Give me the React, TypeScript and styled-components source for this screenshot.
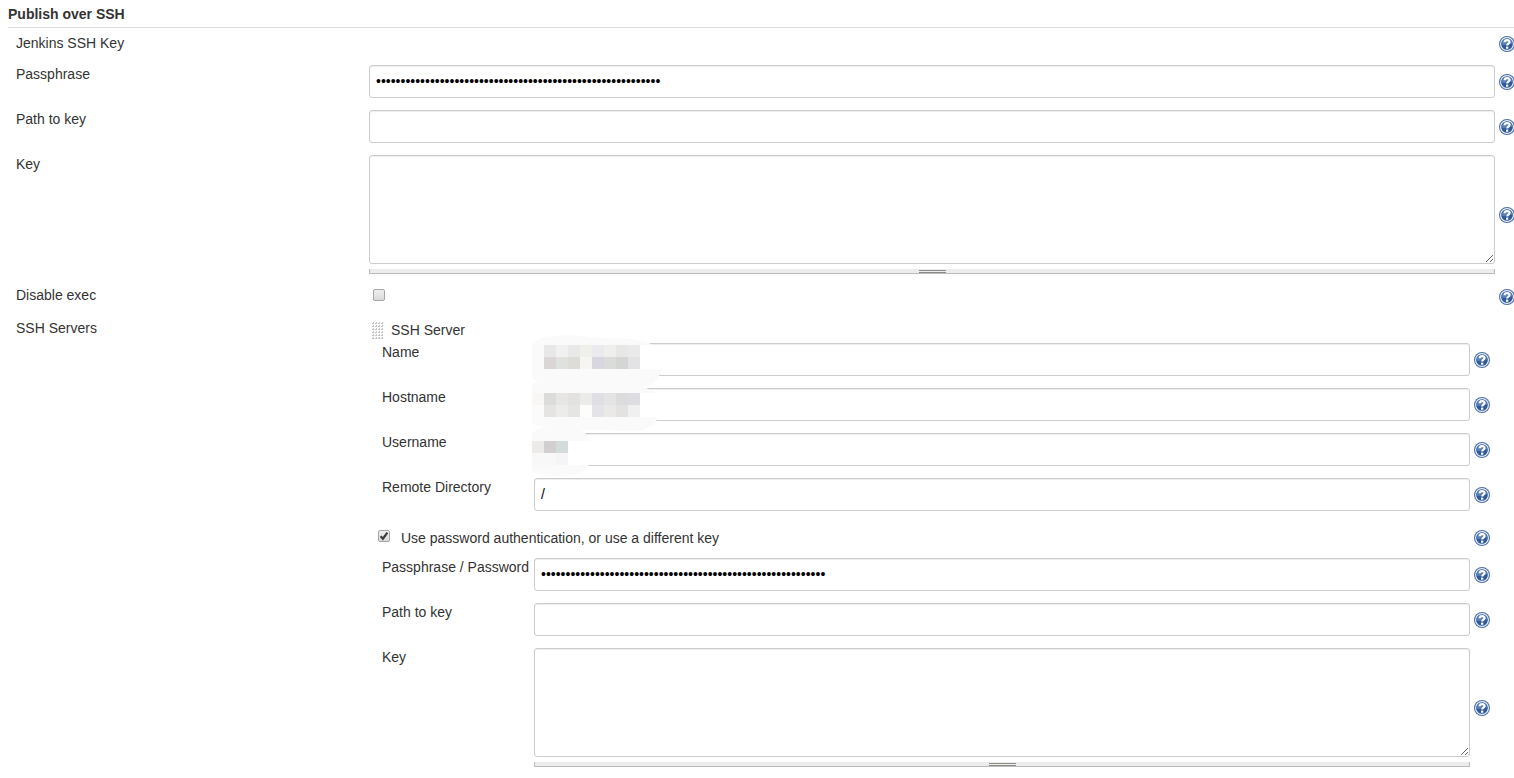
import React, { useId } from "react";
import styled, { createGlobalStyle } from "styled-components";

const GlobalStyle = createGlobalStyle`
  *, *::before, *::after { box-sizing: border-box; }
  body {
    margin: 0;
    background: #fff;
    color: #333;
    font: 14px/18px "Liberation Sans", Arial, Helvetica, sans-serif;
  }
`;

const Page = styled.main`
  padding: 5px 0 11px 8px;
  overflow-x: clip;
`;

const SectionTitle = styled.h1`
  margin: 0;
  padding-bottom: 4px;
  border-bottom: 1px solid #ddd;
  font-size: 14px;
  line-height: 18px;
  font-weight: 700;
`;

const Form = styled.form`
  display: flex;
  flex-direction: column;
  gap: 12px;
  padding: 6px 0 0 8px;
`;

const Row = styled.div<{ $nested?: boolean; $height?: number }>`
  display: grid;
  grid-template-columns: ${(p) => (p.$nested ? "152px minmax(0, 1fr) 20px" : "353px minmax(0, 1fr) 19px")};
  min-height: ${(p) => p.$height ?? 18}px;
`;

const Label = styled.label`
  display: block;
  white-space: nowrap;
`;

const Caption = styled.span`
  display: block;
`;

const Control = styled.div`
  position: relative;
  grid-column: 2;
  min-width: 0;
`;

const TextInput = styled.input`
  display: block;
  width: 100%;
  height: 33px;
  padding: 5px 6px 7px;
  border: 1px solid #ccc;
  border-radius: 3px;
  box-shadow: inset 0 1px 1px rgba(0, 0, 0, 0.075);
  background: #fff;
  color: #000;
  font: inherit;
  outline: none;
`;

const TextArea = styled.textarea`
  display: block;
  width: 100%;
  height: 109px;
  padding: 6px;
  border: 1px solid #ccc;
  border-radius: 3px;
  box-shadow: inset 0 1px 1px rgba(0, 0, 0, 0.075);
  background: #fff;
  color: #000;
  font: inherit;
  outline: none;
  resize: vertical;
`;

const ResizeBar = styled.div`
  display: flex;
  justify-content: center;
  height: 5px;
  margin-top: 5px;
  padding-top: 1px;
  border: solid #bbb;
  border-width: 0 1px 1px;
  background: #ececec;
`;

const ResizeGrip = styled.span`
  width: 27px;
  height: 3px;
  border: solid #8a8c86;
  border-width: 1px 0;
`;

const CheckBox = styled.input`
  flex: none;
  appearance: none;
  display: block;
  width: 12px;
  height: 12px;
  margin: 3px 0 0 4px;
  border: 1px solid #a6a6a6;
  border-radius: 2px;
  background: linear-gradient(#eee, #dadada);
`;

const CheckLine = styled.div`
  position: relative;
  grid-column: 1 / 3;
  display: flex;
  gap: 11px;
  margin-left: -8px;

  ${CheckBox} {
    margin-top: 1px;
  }
`;

const CheckMark = styled.svg`
  position: absolute;
  left: 4px;
  top: 1px;
  width: 12px;
  height: 12px;
  pointer-events: none;
`;

const HelpButton = styled.button`
  grid-column: 3;
  align-self: center;
  justify-self: start;
  width: 16px;
  height: 16px;
  margin: 0 0 0 4px;
  padding: 0;
  border: 0;
  background: none;
  cursor: pointer;

  svg { display: block; }
`;

const Servers = styled.div`
  padding-top: 2px;
`;

const ServerHeading = styled.div`
  display: flex;
  gap: 7px;
  padding-left: 3px;
  height: 22px;
`;

const DragHandle = styled.svg`
  flex: none;
  width: 12px;
  height: 18px;
  margin-top: 1px;
`;

const ServerFields = styled.div`
  display: flex;
  flex-direction: column;
  gap: 12px;
  padding: 0 5px 0 13px;
`;

const AuthFields = styled(ServerFields)`
  padding: 0;
`;

const AuthBlock = styled.div`
  display: flex;
  flex-direction: column;
  gap: 11px;
  padding-top: 6px;
`;

const Smudge = styled.svg`
  position: absolute;
  left: -2px;
  top: -9px;
  width: 132px;
  height: 54px;
  pointer-events: none;
`;

function Help({ topic }: { topic: string }) {
  return (
    <HelpButton type="button" aria-label={`Help for feature: ${topic}`}>
      <svg width="16" height="16" viewBox="0 0 16 16" fill="none">
        <circle cx="8" cy="8" r="8" fill="#4a6fa9" />
        <circle cx="8" cy="8" r="6.4" fill="#2f5999" stroke="#eef2f9" strokeWidth="1.1" />
        <path d="M2.6 8.4a5.4 5.4 0 0 1 10.8-.8C10 7 6 10 2.6 8.4z" fill="#5a80b8" />
        <path d="M5.6 6.3C5.6 3.5 10.6 3.3 10.6 6c0 1.7-2.4 1.7-2.4 3.6" stroke="#fff" strokeWidth="2.1" />
        <rect x="7" y="10.6" width="2.3" height="2.1" fill="#fff" />
      </svg>
    </HelpButton>
  );
}

type SmudgeShape = { area: string[]; x: number; y: number; rows: string[][] };

const smudges: Record<string, SmudgeShape> = {
  name: {
    area: [
      "M0 12C4 6 8 4 14 3C26 1 42 1 52 2C68 5 88 4 100 5Q115 7 121 11H0z",
      "M0 11H12V35H130Q129 43 117 52H12L0 44z",
    ],
    x: 12,
    y: 11,
    rows: [
      ["#e8e8e8", "#f1f1f1", "#e9e9e9", "#efefeb", "#ebebed", "#efefed", "#e7e7e7", "#eaeaea"],
      ["#dbd6d6", "#dfe1df", "#dddcd7", "#f6f5f3", "#d8d6de", "#dbdbd9", "#d4d6d5", "#e3e3e5"],
    ],
  },
  hostname: {
    area: [
      "M0 6Q5 2 13 2H48Q78 2 98 4Q113 7 123 14H0z",
      "M0 38H126Q122 49 105 52C90 53 82 51 70 51H48Q24 51 10 48Q4 46 0 43z",
    ],
    x: 0,
    y: 14,
    rows: [
      ["#f8f7f5", "#dcdcda", "#e6e6e6", "#e3e2e0", "#ebebe9", "#dfdfe4", "#e4e4e4", "#dcdcdc", "#dedee2"],
      ["#fbfbfb", "#e5e4e2", "#ececec", "#e5e5e3", "#fdfdfb", "#e4e4e8", "#eae9e7", "#e2e2e2", "#f0f0f0"],
    ],
  },
  username: {
    area: [
      "M0 9Q5 4 13 4H38Q48 4 53 9Q57 13 58 17H0z",
      "M0 41H57Q50 51 34 52Q18 53 8 51Q3 49 0 46z",
    ],
    x: 0,
    y: 17,
    rows: [
      ["#ecebe9", "#d1cfd0", "#d3dcda"],
      ["#f8f8f8", "#f8f8f8", "#f5f5f8"],
    ],
  },
};

function Redaction({ shape }: { shape: SmudgeShape }) {
  return (
    <Smudge viewBox="0 0 132 54" aria-hidden="true">
      {shape.area.map((d) => (
        <path key={d} d={d} fill="#fafafa" />
      ))}
      {shape.rows.map((row, r) =>
        row.map((fill, c) => (
          <rect key={`${r}-${c}`} x={shape.x + c * 12} y={shape.y + r * 12} width="12" height="12" fill={fill} shapeRendering="crispEdges" />
        ))
      )}
    </Smudge>
  );
}

type FieldProps = {
  label: string;
  nested?: boolean;
  type?: "text" | "password";
  value?: string;
  redacted?: SmudgeShape;
};

function Field({ label, nested, type = "text", value = "", redacted }: FieldProps) {
  const id = useId();
  return (
    <Row $nested={nested}>
      <Label htmlFor={id}>{label}</Label>
      <Control>
        <TextInput id={id} type={type} defaultValue={value} autoComplete="off" />
        {redacted && <Redaction shape={redacted} />}
      </Control>
      <Help topic={label} />
    </Row>
  );
}

function KeyField({ nested }: { nested?: boolean }) {
  const id = useId();
  return (
    <Row $nested={nested}>
      <Label htmlFor={id}>Key</Label>
      <Control>
        <TextArea id={id} spellCheck={false} />
        <ResizeBar>
          <ResizeGrip />
        </ResizeBar>
      </Control>
      <Help topic="Key" />
    </Row>
  );
}

function Grip() {
  const dots = [];
  for (let y = 0; y < 6; y++) {
    for (let x = 0; x < 4; x++) {
      dots.push(<path key={`${x}-${y}`} d={`M${x * 3} ${y * 3 + 1}h1v-1h1v2h-2z`} fill="#c2c2c0" />);
    }
  }
  return (
    <DragHandle viewBox="0 0 12 18" aria-hidden="true" shapeRendering="crispEdges">
      {dots}
    </DragHandle>
  );
}

const secret = "x".repeat(58);

export default function App() {
  return (
    <>
      <GlobalStyle />
      <Page>
        <SectionTitle>Publish over SSH</SectionTitle>
        <Form>
          <Row $height={19}>
            <Caption>Jenkins SSH Key</Caption>
            <Help topic="Jenkins SSH Key" />
          </Row>
          <Field label="Passphrase" type="password" value={secret} />
          <Field label="Path to key" />
          <KeyField />
          <Row $height={21}>
            <Label htmlFor="disable-exec">Disable exec</Label>
            <Control>
              <CheckBox id="disable-exec" type="checkbox" />
            </Control>
            <Help topic="Disable exec" />
          </Row>
          <Row>
            <Caption>SSH Servers</Caption>
            <Servers>
              <ServerHeading>
                <Grip />
                <span>SSH Server</span>
              </ServerHeading>
              <ServerFields>
                <Field nested label="Name" redacted={smudges.name} />
                <Field nested label="Hostname" redacted={smudges.hostname} />
                <Field nested label="Username" redacted={smudges.username} />
                <Field nested label="Remote Directory" value="/" />
                <AuthBlock>
                  <Row $nested>
                    <CheckLine>
                      <CheckBox id="use-password" type="checkbox" defaultChecked />
                      <CheckMark viewBox="0 0 12 12" fill="none">
                        <path d="M2.6 6.3l2.3 2.4 4.5-6" stroke="#3c3c3c" strokeWidth="2.2" />
                      </CheckMark>
                      <Label htmlFor="use-password">Use password authentication, or use a different key</Label>
                    </CheckLine>
                    <Help topic="Use password authentication, or use a different key" />
                  </Row>
                  <AuthFields>
                    <Field nested label="Passphrase / Password" type="password" value={secret} />
                    <Field nested label="Path to key" />
                    <KeyField nested />
                  </AuthFields>
                </AuthBlock>
              </ServerFields>
            </Servers>
          </Row>
        </Form>
      </Page>
    </>
  );
}
